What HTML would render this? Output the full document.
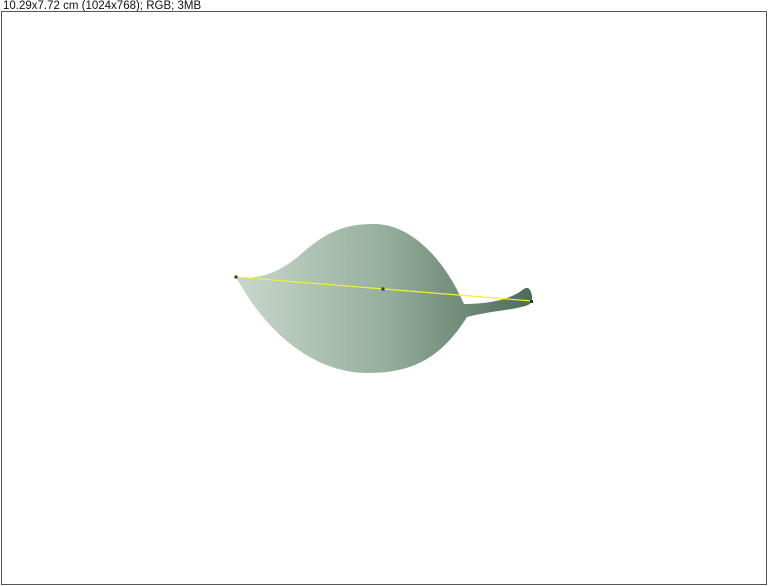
<!DOCTYPE html>
<html><head><style>
html,body{margin:0;padding:0;background:#fff;width:768px;height:586px;overflow:hidden;position:relative;font-family:"Liberation Sans",sans-serif}
.t{position:absolute;left:3px;top:0px;font-size:11.5px;color:#111;line-height:12px}
.f{position:absolute;left:1px;top:11px;width:764px;height:572px;border:1px solid #555;background:#fff}
</style></head><body>
<div class="t">10.29x7.72 cm (1024x768); RGB; 3MB</div>
<div class="f"></div>
<svg width="768" height="586" style="position:absolute;left:0;top:0">
<defs><linearGradient id="g" x1="236" y1="0" x2="532" y2="0" gradientUnits="userSpaceOnUse">
<stop offset="0" stop-color="#c8d8cc"/><stop offset="0.5" stop-color="#97af9d"/><stop offset="1" stop-color="#4e6b58"/></linearGradient></defs>
<path d="M236,277 C260,280 280,272 300,255 C330,228 350,224 375,224 C405,224 440,250 464,304 C490,304 510,299 521,291 C526,287 528,287 530,290 C533,295 533,303 528,305 C515,310 490,311 467,317 C440,360 410,373 367,373 C320,373 270,340 236,277 Z" fill="url(#g)"/>
<line x1="236" y1="277" x2="532" y2="301" stroke="#f2f230" stroke-width="1.2"/>
<rect x="234.5" y="275.5" width="3" height="3" fill="#333"/>
<rect x="381.5" y="287.5" width="3" height="3" fill="#333"/>
<rect x="530" y="300" width="3" height="3" fill="#333"/>
</svg>
</body></html>
